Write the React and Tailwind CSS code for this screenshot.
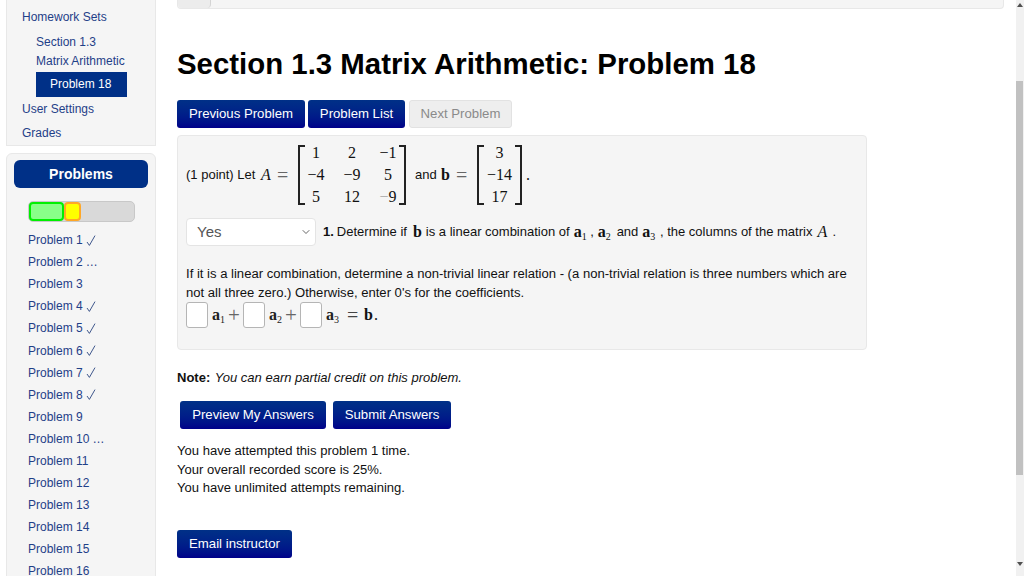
import React from "react";
import { ChevronDown } from "lucide-react";

const problems = [
  { label: "Problem 1", mark: "check" },
  { label: "Problem 2", mark: "dots" },
  { label: "Problem 3" },
  { label: "Problem 4", mark: "check" },
  { label: "Problem 5", mark: "check" },
  { label: "Problem 6", mark: "check" },
  { label: "Problem 7", mark: "check" },
  { label: "Problem 8", mark: "check" },
  { label: "Problem 9" },
  { label: "Problem 10", mark: "dots" },
  { label: "Problem 11" },
  { label: "Problem 12" },
  { label: "Problem 13" },
  { label: "Problem 14" },
  { label: "Problem 15" },
  { label: "Problem 16" },
];

const matrixA = ["1", "2", "−1", "−4", "−9", "5", "5", "12"];
const vectorB = ["3", "−14", "17"];

const Bracket = ({ right }) => (
  <div
    className={
      right
        ? "w-[7px] h-[60px] shrink-0 border-y-2 border-r-2 border-[#222]"
        : "w-[7px] h-[60px] shrink-0 border-y-2 border-l-2 border-[#222]"
    }
  />
);

const NavButton = ({ children, className }) => (
  <button
    className={`h-[28px] rounded-[3px] bg-gradient-to-b from-[#003087] to-[#00008a] text-white text-[13.2px] ${className}`}
  >
    {children}
  </button>
);

const BlankInput = () => (
  <div className="w-[22px] h-[26px] bg-white border border-[#b5b5b5] rounded-[3px]" />
);

const Vec = ({ sub }) => (
  <span className="w-[16px] ml-[4px] font-['Liberation_Serif',serif] font-bold text-[16px] text-[#222]">
    a<sub className="text-[10px] font-normal">{sub}</sub>
  </span>
);

const Plus = () => (
  <span className="w-[15px] text-[#666] text-[21px] leading-none font-['Liberation_Serif',serif]">
    +
  </span>
);

export default function App() {
  return (
    <div className="h-[576px] overflow-hidden flex bg-white font-['Liberation_Sans',Arial,sans-serif] text-[14px] text-[#111]">
      {/* Sidebar */}
      <div className="w-[150px] ml-[6px] shrink-0">
        <div className="h-[146px] bg-[#f5f5f5] border-x border-b border-[#e8e8e8] pl-[15px] pt-[7px] text-[12px] text-[#1f4088]">
          <div className="h-[20px] leading-[20px]">Homework Sets</div>
          <div className="pl-[14px] pt-[5px]">
            <div className="h-[19px] leading-[20px]">Section 1.3</div>
            <div className="h-[20px] leading-[20px]">Matrix Arithmetic</div>
            <div className="mt-[1px] w-[91px] h-[25px] leading-[25px] bg-[#003087] text-white pl-[14px]">
              Problem 18
            </div>
          </div>
          <div className="h-[24px] leading-[24px]">User Settings</div>
          <div className="h-[24px] leading-[24px]">Grades</div>
        </div>

        <div className="mt-[7px] h-[500px] bg-[#f5f5f5] border border-[#e8e8e8] rounded-[6px] pt-[6px] px-[7px]">
          <div className="h-[28px] leading-[28px] rounded-[6px] bg-[#003087] text-white text-center font-bold text-[14px]">
            Problems
          </div>
          <div className="mt-[13px] ml-[14px] w-[107px] h-[21px] flex bg-[#d9d9d9] border border-[#c8c8c8] rounded-[5px]">
            <div className="w-[35px] bg-[#88ff88] border-2 border-[#00f000] rounded-[4px]" />
            <div className="w-[17px] bg-[#ffff00] border-2 border-[#ffa726] rounded-[4px]" />
          </div>
          <div className="mt-[7px] pl-[14px] text-[12px] text-[#1f4088]">
            {problems.map((p) => (
              <div key={p.label} className="h-[22.1px] leading-[22px] flex items-center whitespace-nowrap">
                {p.label}
                {p.mark === "dots" && <span className="ml-[3px]">…</span>}
                {p.mark === "check" && (
                  <svg width="10" height="11" viewBox="0 0 10 11" className="ml-[3px]">
                    <path d="M1 7 L3.4 10.4 L9 .6" fill="none" stroke="#2a4580" strokeWidth=".9" />
                  </svg>
                )}
              </div>
            ))}
          </div>
        </div>
      </div>

      {/* Main column */}
      <div className="w-[827px] ml-[21px] shrink-0">
        <div className="h-[9px] flex bg-[#f5f5f5] border-x border-b border-[#e8e8e8] rounded-b-[4px]">
          <div className="w-[33px] bg-[#ececec] border-r border-[#d4d4d4] rounded-b-[4px]" />
        </div>

        <h1 className="mt-[36px] h-[38px] leading-[38px] text-[29.4px] font-bold text-black whitespace-nowrap">
          Section 1.3 Matrix Arithmetic: Problem 18
        </h1>

        <div className="mt-[17px] flex gap-[3px]">
          <NavButton className="w-[128px]">Previous Problem</NavButton>
          <NavButton className="w-[97px]">Problem List</NavButton>
          <button className="w-[103px] h-[28px] ml-[1px] rounded-[3px] bg-[#eeeeee] border border-[#e2e2e2] text-[#8a8a8a] text-[13.2px]">
            Next Problem
          </button>
        </div>

        {/* Problem box */}
        <div className="mt-[7px] w-[690px] h-[215px] bg-[#f5f5f5] border border-[#e8e8e8] rounded-[4px] pl-[8px] text-[13px] text-[#111]">
          <div className="mt-[8px] h-[60px] flex items-center font-['Liberation_Serif',serif] text-[16px] pt-[1px]">
            <span className="font-['Liberation_Sans',sans-serif] text-[13px] w-[75px] whitespace-nowrap">
              (1 point) Let
            </span>
            <span className="italic w-[16px]">A</span>
            <span className="w-[21px] text-[#666] text-[20px] leading-none">=</span>
            <Bracket />
            <div className="w-[108px] shrink-0 -mx-[7px] grid grid-cols-[36px_36px_36px] text-center leading-[22px]">
              {matrixA.map((v, i) => (
                <span key={i}>{v}</span>
              ))}
              <span>
                <span className="text-[#aaa]">−</span>9
              </span>
            </div>
            <Bracket right />
            <span className="ml-[9px] w-[26px] font-['Liberation_Sans',sans-serif] text-[13px]">
              and
            </span>
            <span className="font-bold w-[15px]">b</span>
            <span className="w-[21px] text-[#666] text-[20px] leading-none">=</span>
            <Bracket />
            <div className="w-[31px] shrink-0 text-center leading-[22px]">
              {vectorB.map((v) => (
                <div key={v}>{v}</div>
              ))}
            </div>
            <Bracket right />
            <span className="ml-[4px]">.</span>
          </div>

          <div className="mt-[14px] h-[28px] flex items-center">
            <div className="w-[130px] h-[28px] flex items-center justify-between bg-white border border-[#e4e4e4] rounded-[4px] pl-[10px] pr-[3px] text-[15px] text-[#555]">
              <span className="pt-[1px]">Yes</span>
              <ChevronDown size={12} strokeWidth={1.5} className="text-[#333]" />
            </div>
            <span className="ml-[7px] font-bold">1.</span>
            <span className="ml-[3px] whitespace-nowrap">Determine if</span>
            <span className="ml-[6px] font-['Liberation_Serif',serif] font-bold text-[16px]">b</span>
            <span className="ml-[4px] whitespace-nowrap">is a linear combination of</span>
            <span className="ml-[4px] w-[13px] font-['Liberation_Serif',serif] font-bold text-[16px]">
              a<sub className="text-[10px] font-normal">1</sub>
            </span>
            <span className="w-[11px] whitespace-nowrap">&nbsp;,</span>
            <span className="w-[13px] font-['Liberation_Serif',serif] font-bold text-[16px]">
              a<sub className="text-[10px] font-normal">2</sub>
            </span>
            <span className="ml-[6px]">and</span>
            <span className="ml-[4px] w-[13px] font-['Liberation_Serif',serif] font-bold text-[16px]">
              a<sub className="text-[10px] font-normal">3</sub>
            </span>
            <span className="ml-[1px] whitespace-nowrap">&nbsp;, the columns of the matrix</span>
            <span className="ml-[5px] w-[15px] font-['Liberation_Serif',serif] italic text-[16px]">A</span>
            <span>.</span>
          </div>

          <p className="mt-[19px] leading-[18.7px] w-[670px] text-[13.08px]">
            If it is a linear combination, determine a non-trivial linear relation - (a
            non-trivial relation is three numbers which are not all three zero.) Otherwise,
            enter 0's for the coefficients.
          </p>

          <div className="flex items-center h-[26px]">
            <BlankInput />
            <Vec sub="1" />
            <Plus />
            <BlankInput />
            <Vec sub="2" />
            <Plus />
            <BlankInput />
            <Vec sub="3" />
            <span className="ml-[5px] w-[17px] text-[#444] text-[20px] leading-none font-['Liberation_Serif',serif]">
              =
            </span>
            <span className="font-['Liberation_Serif',serif] font-bold text-[16px]">b</span>
            <span className="ml-[1px] font-['Liberation_Serif',serif] text-[16px]">.</span>
          </div>
        </div>

        <p className="mt-[19px] h-[18px] leading-[18px] text-[13px] text-[#111]">
          <b>Note:</b> <i className="ml-[1px]">You can earn partial credit on this problem.</i>
        </p>

        <div className="mt-[14px] ml-[3px] flex gap-[7px]">
          <NavButton className="w-[146px] pb-[1px]">Preview My Answers</NavButton>
          <NavButton className="w-[118px] pb-[1px]">Submit Answers</NavButton>
        </div>

        <div className="mt-[13px] text-[13.05px] leading-[18.7px] text-[#111]">
          <div>You have attempted this problem 1 time.</div>
          <div>Your overall recorded score is 25%.</div>
          <div>You have unlimited attempts remaining.</div>
        </div>

        <NavButton className="mt-[32px] w-[115px] pb-[1px]">Email instructor</NavButton>
      </div>

      <div className="flex-1" />

      {/* Page scrollbar */}
      <div className="w-[8px] h-[576px] shrink-0 bg-[#f1f1f1] flex flex-col items-center">
        <svg width="6" height="4" viewBox="0 0 6 4" className="mt-[3px] shrink-0">
          <path d="M3 0 L6 4 L0 4 Z" fill="#505050" />
        </svg>
        <div className="mt-[74px] w-[7px] h-[394px] bg-[#c1c1c1] self-start" />
        <svg width="6" height="4" viewBox="0 0 6 4" className="mt-[87px] shrink-0">
          <path d="M0 0 L6 0 L3 4 Z" fill="#505050" />
        </svg>
      </div>
    </div>
  );
}
